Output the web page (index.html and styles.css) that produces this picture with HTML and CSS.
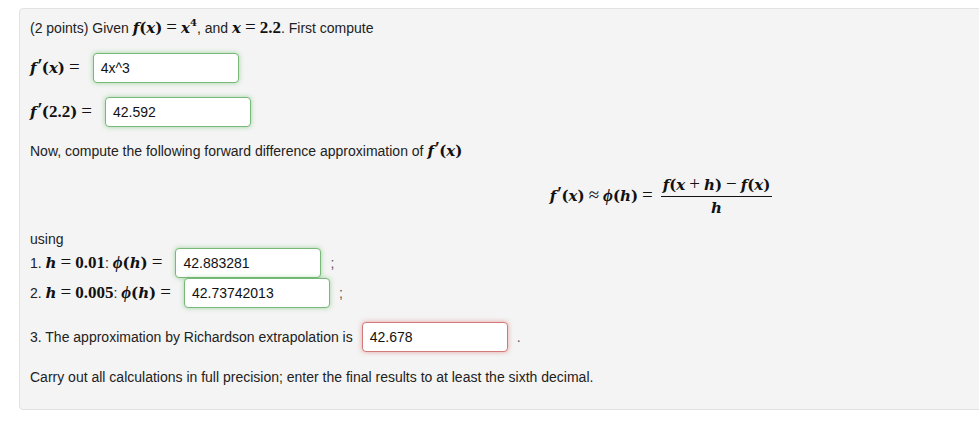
FILE: index.html
```html
<!DOCTYPE html>
<html>
<head>
<meta charset="utf-8">
<link rel="stylesheet" href="styles.css">
</head>
<body>
<div class="panel">
  <p class="line first">(2 points) Given <span class="m"><i>f</i>(<i>x</i>)<span class="op">=</span><i>x</i><sup>4</sup></span>, and <span class="m"><i>x</i><span class="op">=</span><span class="n">2.2</span></span>. First compute</p>

  <div class="row r1">
    <span class="m"><i>f</i><span class="pr">′</span>(<i>x</i>)<span class="op">=</span></span>
    <span class="input ok">4x^3</span>
  </div>
  <div class="row r2">
    <span class="m"><i>f</i><span class="pr">′</span>(<span class="n">2.2</span>)<span class="op">=</span></span>
    <span class="input ok">42.592</span>
  </div>

  <p class="line now">Now, compute the following forward difference approximation of <span class="m"><i>f</i><span class="pr">′</span>(<i>x</i>)</span></p>

  <div class="display">
    <span class="m"><i>f</i><span class="pr">′</span>(<i>x</i>)<span class="op">≈</span><i class="phi">ϕ</i>(<i>h</i>)<span class="op">=</span></span>
    <span class="frac m">
      <span class="num"><i>f</i>(<i>x</i><span class="op sm">+</span><i>h</i>)<span class="op sm">−</span><i>f</i>(<i>x</i>)</span>
      <span class="den"><i>h</i></span>
    </span>
  </div>

  <p class="line using">using</p>
  <div class="row r3">
    <span>1. <span class="m"><i>h</i><span class="op">=</span><span class="n">0.01</span></span>: <span class="m"><i class="phi">ϕ</i>(<i>h</i>)<span class="op">=</span></span></span>
    <span class="input ok">42.883281</span>
    <span class="sep">;</span>
  </div>
  <div class="row r4">
    <span>2. <span class="m"><i>h</i><span class="op">=</span><span class="n">0.005</span></span>: <span class="m"><i class="phi">ϕ</i>(<i>h</i>)<span class="op">=</span></span></span>
    <span class="input ok">42.73742013</span>
    <span class="sep">;</span>
  </div>
  <div class="row r5">
    <span>3. The approximation by Richardson extrapolation is</span>
    <span class="input bad">42.678</span>
    <span class="sep">.</span>
  </div>

  <p class="line carry">Carry out all calculations in full precision; enter the final results to at least the sixth decimal.</p>
</div>
</body>
</html>
```

FILE: styles.css
```css
html, body {
  margin: 0;
  padding: 0;
  background: #ffffff;
  overflow: hidden;
}
body {
  font-family: "Liberation Sans", Arial, sans-serif;
  font-size: 14px;
  color: #222;
  width: 979px;
  height: 423px;
}
.panel {
  margin: 8px 0 0 19px;
  width: 1284px;
  box-sizing: border-box;
  background: #f4f4f4;
  border: 1px solid #e2e2e2;
  border-radius: 4px;
  padding: 9px 10px 22px 10px;
}
.line {
  margin: 0;
  line-height: 20px;
}
.m {
  font-family: "DejaVu Serif", "Liberation Serif", serif;
  font-weight: bold;
  font-size: 15px;
  color: #111;
}
.m i {
  font-style: italic;
}
.m i.phi {
  font-family: "Liberation Serif", "Times New Roman", serif;
  font-size: 17px;
}
.m .n {
  font-family: "Liberation Serif", "Times New Roman", serif;
  font-size: 17px;
  font-weight: bold;
}
.m .pr {
  font-family: "Liberation Serif", serif;
  font-weight: bold;
  font-size: 19px;
  margin-left: 1px;
  margin-right: -1px;
  line-height: 0;
  position: relative;
  top: -1px;
}
.m .op {
  font-family: "Liberation Serif", "Times New Roman", serif;
  font-weight: normal;
  font-size: 19px;
  margin: 0 4px;
  line-height: 0;
}
.m .op.sm {
  margin: 0 4px;
}
.m sup {
  font-size: 10px;
  line-height: 0;
  vertical-align: 7px;
}
.row {
  display: flex;
  align-items: center;
  height: 30px;
}
.r1 { margin-top: 15px; }
.r2 { margin-top: 14px; }
.now { margin-top: 14px; }
.input {
  display: inline-flex;
  align-items: center;
  box-sizing: border-box;
  height: 30px;
  width: 146px;
  padding: 0 7px;
  background: #fff;
  border-radius: 4px;
  font-family: "Liberation Sans", Arial, sans-serif;
  font-size: 14px;
  font-weight: normal;
  color: #111;
  margin-left: 9px;
}
.ok {
  border: 1px solid #78b878;
  box-shadow: 0 0 5px rgba(92, 184, 92, 0.55);
}
.bad {
  border: 1px solid #d27a7a;
  box-shadow: 0 0 5px rgba(217, 83, 79, 0.5);
}
.sep {
  margin-left: 9px;
  color: #555;
}
.display {
  margin-top: 15px;
  display: flex;
  justify-content: center;
  align-items: center;
  height: 40px;
}
.frac {
  display: inline-flex;
  flex-direction: column;
  align-items: center;
  margin-left: 4px;
}
.num {
  line-height: 18px;
  padding: 0 2px 2px 2px;
  border-bottom: 1px solid #111;
}
.den {
  line-height: 18px;
  padding-top: 2px;
}
.using {
  margin-top: 14px;
  line-height: 18px;
}
.r5 { margin-top: 14px; }
.carry { margin-top: 15px; }
```
